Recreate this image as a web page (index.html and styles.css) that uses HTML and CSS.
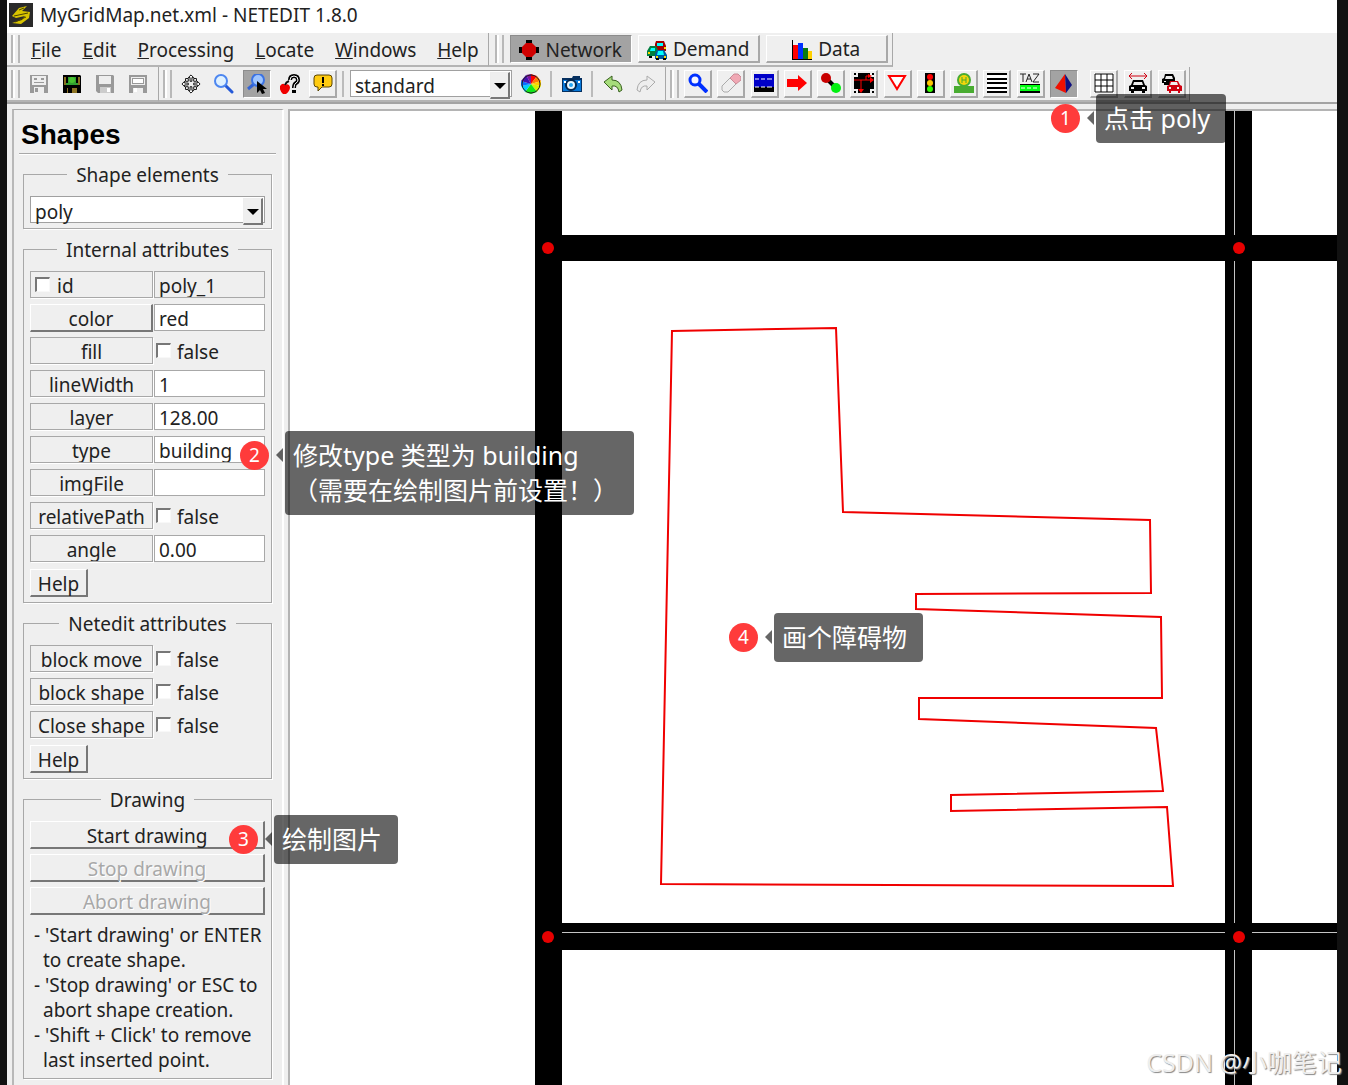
FILE: index.html
```html
<!DOCTYPE html>
<html lang="zh-CN">
<head>
  <meta charset="UTF-8">
  <meta name="viewport" content="width=device-width, initial-scale=1.0">
  <title>MyGridMap.net.xml - NETEDIT 1.8.0</title>
  <link rel="stylesheet" href="styles.css">
</head>
<body>
  <div class="window">
    <header class="titlebar">
      <svg class="logo" viewBox="0 0 24 24"><rect width="24" height="24" fill="#2a2a2a"/><path d="M3 13L10 5L18 3L13 8L21 9L20 15L12 21L3 20L13 17L16 13L7 15Z" fill="#d8c400"/><path d="M5 13L19 10M6 19L17 14M10 7L15 5" stroke="#4a4300" fill="none"/></svg>
      <span>MyGridMap.net.xml - NETEDIT 1.8.0</span>
    </header>

    <div class="bar menubar">
      <nav class="dock menus">
        <i class="grip"></i>
        <button><u>F</u>ile</button>
        <button><u>E</u>dit</button>
        <button><u>P</u>rocessing</button>
        <button><u>L</u>ocate</button>
        <button><u>W</u>indows</button>
        <button><u>H</u>elp</button>
      </nav>
      <div class="dock modes">
        <i class="grip"></i>
        <button class="mode on">
          <svg viewBox="0 0 20 20"><path d="M7 0h6v5H7zM7 15h6v5H7zM0 7h5v6H0zM15 7h5v6h-5z"/><path d="M7 3h6l4 4v6l-4 4H7l-4-4V7z" fill="#d00000"/></svg>
          Network
        </button>
        <button class="mode">
          <svg viewBox="0 0 20 20"><path d="M9 1h8l2 5v5H8V4z" fill="#a00000"/><path d="M10 3h6v3h-6z" fill="#0ff"/><path d="M3 6h6l2 4v6H0v-5z" fill="#008040"/><path d="M4 8h4v3H3z" fill="#0ff"/><path d="M10 10h7l3 5v4H8v-5z" fill="#005a9c"/><path d="M11 11h5l1 4h-7z" fill="#0ff"/><path d="M1 12h2v2H1zM9 16h2v2H9zM17 16h2v2h-2zM17 7h2v2h-2z" fill="#ffd800"/><path d="M2 16h3v2H2zM9 18h3v2H9zM16 18h3v2h-3z"/></svg>
          Demand
        </button>
        <button class="mode">
          <svg viewBox="0 0 20 20"><path d="M1 5h5v14H1z" fill="red"/><path d="M6 3h5v16H6z" fill="#0030ff"/><path d="M11 8h5v11h-5z" fill="#0a7a10"/><path d="M16 11h4v8h-4z" fill="#ffd000"/><path d="M0 0h1v19h19v1H0z"/></svg>
          Data
        </button>
      </div>
    </div>

    <div class="bar toolbar">
      <div class="dock files">
        <i class="grip"></i>
        <button class="tool" aria-label="Save network" disabled><svg viewBox="0 0 20 20"><path d="M1 1h18v18H1z" fill="#999"/><path d="M3 2h14v9H3zM5 13h10v6H5z" fill="#eee"/><path d="M5 4h3v2H5zM12 4h3v2h-3zM5 8h10v1H5zM6 14h3v4H6z" fill="#999"/></svg></button>
        <button class="tool" aria-label="Save additionals"><svg viewBox="0 0 20 20"><path d="M1 1h17l1 1v17H1z"/><path d="M2 3h2v8H2zM16 3h2v8h-2z" fill="#886f1e"/><path d="M4 9h12v2H4zM6 3h8v7H6z" fill="#30a030"/><circle cx="10" cy="6" r="3" fill="#49c230"/><path d="M5 14h10v5H5z" fill="#8d7424"/><path d="M6 14h4v5H6z"/></svg></button>
        <button class="tool" aria-label="Save demand" disabled><svg viewBox="0 0 20 20"><path d="M1 1h17l1 1v17H3l-2-2z" fill="#999"/><path d="M4 2h12v8H4z" fill="#eee"/><path d="M5 13h11v6H5z" fill="#ccc"/><path d="M12 14h3v4h-3z" fill="#fff"/></svg></button>
        <button class="tool" aria-label="Save data" disabled><svg viewBox="0 0 20 20"><path d="M1 1h18v18H1z" fill="#999"/><path d="M3 3h14v8H3zM5 14h10v5H5z" fill="#eee"/><path d="M4 4h12v6H4z" fill="#999"/><path d="M5 5h10v4H5zM6 14h3v4H6z" fill="#fff"/></svg></button>
      </div>
      <div class="dock views">
        <i class="grip"></i>
        <button class="tool" aria-label="Recenter view"><svg viewBox="-1 -1 22 22"><path d="M10 0l3 3h-2v4H9V3H7zM10 20l3-3h-2v-4H9v4H7zM0 10l3-3v2h4v2H3v2zM20 10l-3-3v2h-4v2h4v2z" fill="#fff" stroke="#000"/><path d="M4 4h3v3H4zM13 4h3v3h-3zM4 13h3v3H4zM13 13h3v3h-3z" fill="#fff" stroke="#000"/></svg></button>
        <button class="tool" aria-label="Edit viewport"><svg viewBox="0 0 20 20"><path d="M11 11l7 7" stroke="#2459d8" stroke-width="3" stroke-linecap="round"/><circle cx="7" cy="7" r="6" fill="#dff1ff" stroke="#4c86f0" stroke-width="2"/></svg></button>
        <button class="tool on" aria-label="Zoom style"><svg viewBox="0 0 20 20"><path d="M7 10l-6 5" stroke="#3263d6" stroke-width="3"/><circle cx="11" cy="6" r="6" fill="#9ec5ff" stroke="#3a72e4" stroke-width="2"/><path d="M8 2l6 9M10 7v12l3-3 2 4 3-1-2-4h4z"/></svg></button>
        <button class="tool" aria-label="What is this"><svg viewBox="0 0 20 20"><path d="M0 12q3-4 5-1 4-2 5 2 0 4-4 7H3q-4-4-3-8z" fill="#f00000"/><path d="M5 11q1-3 4-4" stroke="#111" stroke-width="2" fill="none"/><path d="M10 6q0-4 4-4t4 4q0 2-2 3t-2 5" stroke="#000" stroke-width="4" fill="none"/><path d="M10 6q0-4 4-4t4 4q0 2-2 3t-2 5" stroke="#fff" fill="none"/><path d="M12 16h4v3h-4z"/></svg></button>
        <button class="tool raised" aria-label="Tooltips"><svg viewBox="0 0 20 20"><path d="M4 2h12q3 0 3 3v6q0 3-3 3H9l-4 4v-4H4q-3 0-3-3V5q0-3 3-3z" fill="#ffcb10" stroke="#5b4500"/><path d="M9 4h2v6H9zM9 11h2v2H9z"/></svg></button>
        <i class="sep"></i>
        <div class="combo scheme">
          <select aria-label="Coloring scheme"><option>standard</option></select>
        </div>
        <button class="tool" aria-label="Color wheel"><svg viewBox="0 0 20 20"><path d="M10 10L5 1 10 0z" fill="#80109c"/><path d="M10 10V0l6 2z" fill="#f00"/><path d="M10 10l6-8 4 5z" fill="#ff7b00"/><path d="M10 10l10-3v5z" fill="#ffce00"/><path d="M10 10l10 2-4 6z" fill="#d7f000"/><path d="M10 10l6 8-6 2-6-2z" fill="#10e818"/><path d="M10 10l-6 8-4-6z" fill="#00cfff"/><path d="M10 10L0 12V7z" fill="#0870ff"/><path d="M10 10L0 7l5-6z" fill="#4410b0"/><circle cx="10" cy="10" r="9" fill="none" stroke="#222"/></svg></button>
        <i class="sep"></i>
        <button class="tool" aria-label="Make snapshot"><svg viewBox="0 0 20 20"><path d="M0 4h10l1-2h7v2h2v14H0z" fill="#063060"/><path d="M1 6h18v11H1z" fill="#0878d8"/><circle cx="9" cy="11" r="5" fill="#e8f7ff" stroke="#04264c" stroke-width="2"/><circle cx="9" cy="11" r="2" fill="#25a5f3"/><path d="M2 7h2v2H2zM16 7h2v2h-2z" fill="#fff"/></svg></button>
        <i class="sep"></i>
        <button class="tool" aria-label="Undo"><svg viewBox="0 0 20 20"><path d="M1 8l8-6v4q9 0 10 10l-3 2q-1-7-7-6v4z" fill="#a6dc7b" stroke="#38601e"/></svg></button>
        <button class="tool" aria-label="Redo" disabled><svg viewBox="0 0 20 20"><path d="M19 8l-8-6v4Q2 6 1 16l3 2q1-7 7-6v4z" fill="#eee" stroke="#aaa"/></svg></button>
      </div>
      <div class="dock edits">
        <i class="grip"></i>
        <div class="tools">
          <button class="tool raised" aria-label="Inspect"><svg viewBox="0 0 20 20"><path d="M11 11l8 8" stroke="#0030ff" stroke-width="4"/><circle cx="7" cy="7" r="5" fill="#f6f6ff" stroke="#0030ff" stroke-width="3"/></svg></button>
          <button class="tool raised" aria-label="Delete"><svg viewBox="0 0 20 20"><path d="M1 13l8-8 6 6-8 8H3l-2-2z" fill="#eee" stroke="#aaa"/><path d="M9 5l4-4h4l3 3v3l-5 4z" fill="#f0a8b4" stroke="#c98a96"/></svg></button>
          <button class="tool raised" aria-label="Select"><svg viewBox="0 0 20 20"><path d="M0 1h20v13H0z" fill="#0000c8"/><path d="M0 14h20v5H0z"/><path d="M1 6h4M7 6h4M13 6h5M1 14h4M7 14h4M13 14h5" stroke="#fff"/></svg></button>
          <button class="tool raised" aria-label="Move"><svg viewBox="0 0 20 20"><path d="M0 6h11V2l9 8-9 8v-4H0z" fill="red"/></svg></button>
          <button class="tool raised" aria-label="Create edge"><svg viewBox="0 0 20 20"><path d="M5 5l10 10" stroke="#000" stroke-width="4"/><circle cx="5" cy="5" r="5" fill="#c80000"/><circle cx="15" cy="15" r="5" fill="#00f010"/></svg></button>
          <button class="tool raised" aria-label="Connect"><svg viewBox="0 0 20 20"><path d="M4 0h12v4h4v12h-4v4H4v-4H0V4h4z"/><path d="M0 0h2v2H0zM18 0h2v2h-2zM0 18h2v2H0zM18 18h2v2h-2z"/><path d="M0 7h18M7 7v11M12 7V3h4" stroke="red" fill="none"/><path d="M16 4l4 3-4 3zM4 16h6l-3 4zM14 1l4 2-4 2z" fill="red"/></svg></button>
          <button class="tool raised" aria-label="Prohibition"><svg viewBox="0 0 20 20"><path d="M2 3h16l-8 13z" fill="#fff" stroke="red" stroke-width="2"/></svg></button>
          <button class="tool raised" aria-label="Traffic light"><svg viewBox="0 0 20 20"><path d="M5 0h10v20H5z"/><circle cx="10" cy="4" r="3" fill="red"/><circle cx="10" cy="10" r="3" fill="#ffc800"/><circle cx="10" cy="16" r="3" fill="#3f0"/></svg></button>
          <button class="tool raised" aria-label="Additional"><svg viewBox="0 0 20 20"><path d="M0 13h20v7H0z" fill="#49ac31"/><circle cx="10" cy="7" r="7" fill="#49ac31"/><circle cx="10" cy="7" r="5" fill="#f3d60b"/><path d="M8 4v6M12 4v6M8 7h4" stroke="#49ac31" fill="none"/></svg></button>
          <button class="tool raised" aria-label="Crossing"><svg viewBox="0 0 20 20"><path d="M0 0h20v20H0z" fill="#fff"/><path d="M0 1h20M0 6h20M0 10h20M0 15h20M0 19h20" stroke="#000" stroke-width="2"/></svg></button>
          <button class="tool raised" aria-label="TAZ"><svg viewBox="0 0 20 20"><path d="M0 1h6M3 1v8M6 9l3-8 3 8M7 6h4M13 1h6l-6 8h6" stroke="#222" fill="none"/><path d="M0 11h20v9H0z"/><path d="M0 12h20v6H0z" fill="#0f1"/><path d="M1 15h4M7 15h4M13 15h4" stroke="#fff"/></svg></button>
          <button class="tool on" aria-label="Shape"><svg viewBox="0 0 20 20"><path d="M11 0L1 14l11 5z" fill="#f01000"/><path d="M11 0l1 19 6-8z" fill="#101080"/></svg></button>
        </div>
        <div class="tools checks">
          <button class="tool raised" aria-label="Toggle grid"><svg viewBox="0 0 20 20"><path d="M0 0h20v20H0z" fill="#fff"/><path d="M1 1h18v18H1zM1 7h18M1 13h18M7 1v18M13 1v18" fill="none" stroke="#000"/></svg></button>
          <button class="tool raised" aria-label="Draw vehicles spread"><svg viewBox="0 0 20 20"><path d="M1 3h18M4 0L1 3l3 3M16 0l3 3-3 3" stroke="#d00010" fill="none"/><path d="M5 7h10l2 5 2 1v5h-2v2h-3v-2H6v2H3v-2H1v-5l2-1z"/><path d="M6 9h8l1 3H5zM3 14h3v2H3zM14 14h3v2h-3z" fill="#eee"/></svg></button>
          <button class="tool raised" aria-label="Show demand"><svg viewBox="0 0 20 20"><path d="M3 1h8l2 4v7H2v-2H0V6l2-1z"/><path d="M4 3h6l1 3H3zM2 8h2v1H2z" fill="#eee"/><path d="M8 8h8l2 4 2 1v5h-2v2h-2v-2H9v2H7v-2H5v-5l2-1z" fill="#d00010"/><path d="M9 9h6l1 3H8zM7 14h2v2H7zM15 14h2v2h-2z" fill="#eee"/></svg></button>
        </div>
      </div>
    </div>

    <main class="work">
      <aside class="panel">
        <h1>Shapes</h1>

        <fieldset>
          <legend>Shape elements</legend>
          <div class="combo">
            <select aria-label="Shape element"><option>poly</option></select>
          </div>
        </fieldset>

        <fieldset>
          <legend>Internal attributes</legend>
          <div class="attrs">
            <span class="name check"><input type="checkbox" id="use-id"><label for="use-id">id</label></span>
            <input class="value" type="text" value="poly_1" aria-label="id value" disabled>
            <button class="name push">color</button>
            <input class="value" type="text" value="red" aria-label="color">
            <span class="name">fill</span>
            <label class="bool"><input type="checkbox">false</label>
            <label class="name" for="line-width">lineWidth</label>
            <input class="value" type="text" id="line-width" value="1">
            <label class="name" for="layer">layer</label>
            <input class="value" type="text" id="layer" value="128.00">
            <label class="name" for="type">type</label>
            <input class="value" type="text" id="type" value="building">
            <label class="name" for="img-file">imgFile</label>
            <input class="value" type="text" id="img-file">
            <span class="name">relativePath</span>
            <label class="bool"><input type="checkbox">false</label>
            <label class="name" for="angle">angle</label>
            <input class="value" type="text" id="angle" value="0.00">
          </div>
          <button class="push help">Help</button>
        </fieldset>

        <fieldset>
          <legend>Netedit attributes</legend>
          <div class="attrs">
            <span class="name">block move</span>
            <label class="bool"><input type="checkbox">false</label>
            <span class="name">block shape</span>
            <label class="bool"><input type="checkbox">false</label>
            <span class="name">Close shape</span>
            <label class="bool"><input type="checkbox">false</label>
          </div>
          <button class="push help">Help</button>
        </fieldset>

        <fieldset>
          <legend>Drawing</legend>
          <div class="draw">
            <button class="push">Start drawing</button>
            <button class="push" disabled>Stop drawing</button>
            <button class="push" disabled>Abort drawing</button>
          </div>
          <ul class="hints">
            <li>'Start drawing' or ENTER<br>to create shape.</li>
            <li>'Stop drawing' or ESC to<br>abort shape creation.</li>
            <li>'Shift + Click' to remove<br>last inserted point.</li>
          </ul>
        </fieldset>
      </aside>

      <section class="canvas">
        <svg class="map" role="img" aria-label="Road network">
          <g transform="translate(-290 -111)">
            <rect x="535" y="111" width="27" height="100%"/>
            <rect x="1225" y="111" width="27" height="100%"/>
            <rect x="535" y="235" width="100%" height="26"/>
            <rect x="535" y="923" width="100%" height="27"/>
            <path class="lane" d="M1234.5 111V235M1234.5 261V923M1234.5 950V1085M562 932.500H1225M1252 932.500H1348"/>
            <circle class="node" cx="548" cy="248" r="6"/>
            <circle class="node" cx="1239" cy="248" r="6"/>
            <circle class="node" cx="548" cy="937" r="6"/>
            <circle class="node" cx="1239" cy="937" r="6"/>
            <polygon class="shape" points="672,331 836,328 843,512 1150,520 1151,593 916,594 916,609 1161,617 1162,698 919,698 919,719 1156,728 1163,791 951,795 951,811 1167,807 1173,886 661,884"/>
          </g>
        </svg>
      </section>
    </main>
  </div>

  <div class="note note-poly"><b>1</b><p>点击 poly</p></div>
  <div class="note note-type"><b>2</b><p>修改type 类型为 building<br>（需要在绘制图片前设置！）</p></div>
  <div class="note note-start"><b>3</b><p>绘制图片</p></div>
  <div class="note note-shape"><b>4</b><p>画个障碍物</p></div>
  <div class="watermark">CSDN @小咖笔记</div>
</body>
</html>
```
FILE: styles.css
```css
*{
  box-sizing: border-box;
}
body{
  margin: 0;
  position: relative;
  background-color: #111;
  color: #222;
  font: 19px/25px "Noto Sans", "Noto Sans CJK SC", sans-serif;
}
button, input, select{
  font: inherit;
  color: inherit;
  margin: 0;
  padding: 0;
  border: none;
  border-radius: 0;
  background: none;
}
.window{
  display: flex;
  flex-direction: column;
  min-height: 100vh;
  margin: 0 11px 0 7px;
  background-color: #efefef;
}

.titlebar{
  display: flex;
  align-items: center;
  gap: 7px;
  height: 33px;
  padding: 0 2px 3px;
  background-color: white;
}
.logo{
  width: 24px;
  height: 24px;
}

/* menu bar and tool bars */
.bar{
  display: flex;
}
.dock{
  display: flex;
  align-items: center;
  height: 35px;
  padding-left: 4px;
  border-right: 1px solid #a8a8a8;
  border-bottom: 2px solid #b4b4b4;
}
.grip{
  width: 9px;
  height: 28px;
  border: 1px solid #b8b8b8;
  border-width: 0 2px;
  box-shadow: inset 2px 0 white;
}
.menubar .dock{
  height: 34px;
}
.menubar button{
  padding-top: 2px;
}
.menus{
  gap: 21px;
  padding-right: 9px;
}
.menus .grip{
  margin-right: -10px;
}
.modes{
  gap: 6px;
  padding-left: 6px;
  padding-right: 4px;
}
.mode{
  display: flex;
  align-items: center;
  justify-content: center;
  gap: 6px;
  width: 122px;
  height: 28px;
}
.mode svg, .tool svg{
  width: 20px;
  height: 20px;
  flex: none;
}
.mode, .raised{
  border: 1px solid white;
  border-right: 2px solid #a8a8a8;
  border-bottom: 2px solid #a8a8a8;
}
.mode.on, .tool.on{
  background-color: #a3a3a3;
  border: 1px solid #8c8c8c;
  border-right-color: white;
  border-bottom-color: white;
}
.toolbar{
  border-bottom: 2px solid #a3a3a3;
}
.tool{
  display: flex;
  align-items: center;
  justify-content: center;
  width: 28px;
  height: 28px;
}
.files, .views{
  gap: 5px;
}
.files{
  padding-right: 6px;
}
.views{
  padding-right: 5px;
}
.sep{
  width: 2px;
  height: 26px;
  margin-right: 1px;
  background-color: #bbb;
}
.scheme{
  width: 162px;
}
.edits{
  padding-right: 3px;
}
.tools{
  display: flex;
  justify-content: space-between;
  width: 394px;
  margin-left: 5px;
}
.checks{
  width: 96px;
  margin-left: 12px;
}

.combo{
  display: grid;
  grid-template-columns: 1fr 20px;
  height: 27px;
  padding: 1px;
  background-color: white;
  border: 1px solid #a0a0a0;
}
.combo select{
  grid-area: 1 / 1 / 2 / 3;
  min-width: 0;
  padding: 2px 0 0 3px;
  appearance: none;
}
.combo::after{
  content: "";
  grid-area: 1 / 2;
  border: 1px solid #eee;
  border-right: 2px solid #777;
  border-bottom: 2px solid #777;
  background-color: #efefef;
  pointer-events: none;
}
.combo::before{
  content: "";
  grid-area: 1 / 2;
  place-self: center;
  z-index: 1;
  border: 6px solid transparent;
  border-top-color: black;
  border-bottom: none;
  pointer-events: none;
}

/* left panel */
.work{
  display: flex;
  flex: 1;
  padding-top: 5px;
}
.panel{
  width: 272px;
  flex: none;
  margin-left: 5px;
  padding: 7px 10px 6px 9px;
  border-top: 1px solid #a8a8a8;
  border-left: 2px solid #b8b8b8;
  border-right: 2px solid white;
}
h1{
  margin: 0 -4px 6px;
  padding: 2px 0 3px 2px;
  border-bottom: 1px solid #a8a8a8;
  box-shadow: 0 1px white;
  color: black;
  font: bold 28px/31px "Liberation Sans", sans-serif;
}
fieldset{
  min-width: 0;
  margin: 0 0 6px;
  padding: 8px 6px 5px;
  border: 1px solid #a8a8a8;
  box-shadow: 1px 1px white;
}
legend{
  margin: 0 auto;
  padding: 3px 9px 0;
}
.attrs{
  display: grid;
  grid-template-columns: 123px 1fr;
  grid-auto-rows: 27px;
  gap: 6px 1px;
}
.name{
  padding-top: 2px;
  border: 1px solid #a8a8a8;
  box-shadow: 1px 1px white;
  text-align: center;
  overflow: hidden;
}
.check{
  display: flex;
  gap: 7px;
  padding-left: 4px;
}
.value{
  width: 100%;
  min-width: 0;
  padding: 3px 4px 0;
  border: 1px solid #a8a8a8;
  background-color: white;
  overflow: hidden;
}
.value:disabled{
  background-color: #efefef;
}
.bool{
  display: flex;
  gap: 6px;
  padding: 3px 0 0 2px;
}
input[type="checkbox"]{
  appearance: none;
  width: 15px;
  height: 15px;
  margin-top: 3px;
  border: 2px solid #777;
  border-right: 1px solid #f8f8f8;
  border-bottom: 1px solid #f8f8f8;
  background-color: white;
}
.push{
  height: 28px;
  padding-top: 2px;
  border: 1px solid white;
  border-right: 2px solid #777;
  border-bottom: 2px solid #777;
  box-shadow: none;
}
.push:disabled{
  color: #a8a8a8;
  text-shadow: 1px 1px white;
}
.help{
  display: block;
  width: 58px;
  margin-top: 7px;
}
.draw{
  display: grid;
  gap: 5px;
}
.hints{
  margin: 8px 0 0;
  padding: 0 0 0 7px;
  list-style: none;
  white-space: nowrap;
}
.hints li{
  padding-left: 6px;
  text-indent: -9px;
}
.hints li::before{
  content: "- ";
}

/* network view */
.canvas{
  flex: 1;
  display: flex;
  margin-left: 4px;
  border-top: 2px solid #b4b4b4;
  border-left: 2px solid #b4b4b4;
  background-color: white;
}
.map{
  flex: 1;
  width: 100%;
}
.lane{
  stroke: #c4c4c4;
  stroke-width: 1;
}
.node{
  fill: #e60000;
}
.shape{
  fill: none;
  stroke: #f00000;
  stroke-width: 2;
}

/* numbered notes over the window */
.note{
  position: absolute;
  display: flex;
  align-items: flex-start;
  color: white;
  font-size: 25px;
  line-height: 35px;
  white-space: nowrap;
}
.note b{
  width: 29px;
  margin-top: 10px;
  border-radius: 50%;
  background-color: #ff3b3b;
  font-size: 19px;
  font-weight: normal;
  line-height: 29px;
  text-align: center;
}
.note::after{
  content: "";
  order: 1;
  margin: 17px 2px 0 7px;
  border: 7px solid transparent;
  border-right-color: rgba(0, 0, 0, 0.6);
  border-left: none;
}
.note p{
  order: 2;
  margin: 0;
  padding: 7px 16px 7px 8px;
  border-radius: 4px;
  background-color: rgba(0, 0, 0, 0.6);
}
.note-poly{
  left: 1051px;
  top: 94px;
}
.note-type{
  left: 240px;
  top: 431px;
}
.note-start{
  left: 229px;
  top: 815px;
}
.note-shape{
  left: 729px;
  top: 613px;
}
.watermark{
  position: absolute;
  right: 6px;
  bottom: 11px;
  color: #eee;
  font-size: 25px;
  line-height: 35px;
  text-shadow: 1px 1px 1px #888;
}
```
